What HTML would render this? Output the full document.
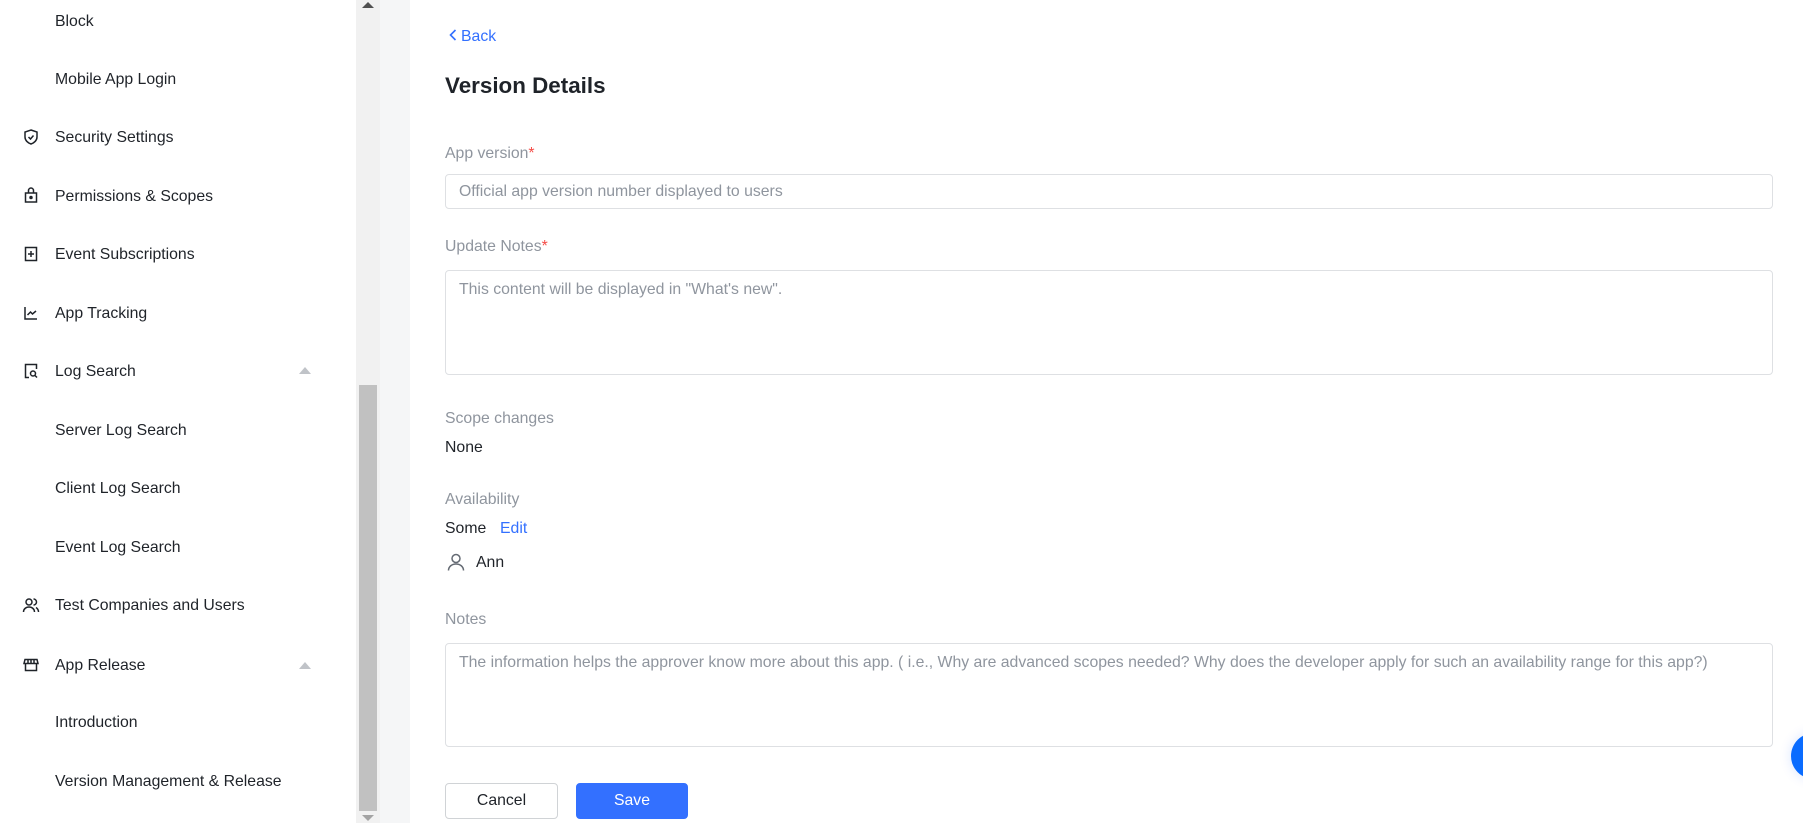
<!DOCTYPE html>
<html><head><style>
*{margin:0;padding:0;box-sizing:border-box}
body{width:1803px;height:823px;overflow:hidden;background:#fff;font-family:"Liberation Sans",Arial,sans-serif;position:relative;color:#1f2329}
.side{position:absolute;left:0;top:0;width:356px;height:823px;background:#fff}
.it{position:absolute;left:55px;font-size:15.8px;color:#1f2329;line-height:20px}
.ic{position:absolute;left:22px;width:18px;height:18px}
.car{position:absolute;left:299px;width:0;height:0;border-left:6px solid transparent;border-right:6px solid transparent;border-bottom:7px solid #c0c3c8}
.sb{position:absolute;left:356px;top:0;width:24px;height:823px;background:#f1f1f1}
.thumb{position:absolute;left:359px;top:385px;width:18px;height:426px;background:#c1c1c1}
.gap{position:absolute;left:380px;top:0;width:30px;height:823px;background:#f5f6f7}
.lbl{position:absolute;left:445px;font-size:15.8px;color:#8f959e;line-height:20px}
.lbl i{color:#f54a45;font-style:normal}
.box{position:absolute;left:445px;width:1328px;border:1px solid #dee0e3;border-radius:4px;font-size:15.8px;color:#8f959e;padding:9px 13px;line-height:20px}
.txt{position:absolute;font-size:15.8px;color:#1f2329;line-height:20px}
.btn{position:absolute;top:783px;height:36px;border-radius:4px;font-size:15.8px;text-align:center;line-height:34px}
</style></head><body>
<div class="side">
<div class="it" style="top:12px">Block</div>
<div class="it" style="top:70px">Mobile App Login</div>
<svg class="ic" style="top:128px" viewBox="0 0 18 18" fill="none" stroke="#1f2329" stroke-width="1.5"><path d="M9 2l6 2v5c0 3.5-3 6-6 7-3-1-6-3.5-6-7V4z"/><path d="M6.5 9l2 2 3-3.5"/></svg>
<div class="it" style="top:128px">Security Settings</div>
<svg class="ic" style="top:186px" viewBox="0 0 18 18" fill="none" stroke="#1f2329" stroke-width="1.5"><rect x="3.5" y="7" width="11" height="9"/><path d="M6.5 7V4.5a2.5 2.5 0 015 0V7"/><circle cx="9" cy="11.5" r="1" fill="#1f2329"/></svg>
<div class="it" style="top:187px">Permissions &amp; Scopes</div>
<svg class="ic" style="top:245px" viewBox="0 0 18 18" fill="none" stroke="#1f2329" stroke-width="1.5"><path d="M3.5 2.5h11v13h-11z"/><path d="M9 6v6M6 9h6"/></svg>
<div class="it" style="top:245px">Event Subscriptions</div>
<svg class="ic" style="top:304px" viewBox="0 0 18 18" fill="none" stroke="#1f2329" stroke-width="1.5"><path d="M3 3v12h12"/><path d="M5.5 11l3-3 2 2 3.5-3"/></svg>
<div class="it" style="top:304px">App Tracking</div>
<svg class="ic" style="top:362px" viewBox="0 0 18 18" fill="none" stroke="#1f2329" stroke-width="1.5"><path d="M7 15.5H3.5v-13h11V7"/><circle cx="11" cy="11.5" r="2.5"/><path d="M13 13.5l2 2"/></svg>
<div class="it" style="top:362px">Log Search</div>
<div class="car" style="top:367px"></div>
<div class="it" style="top:421px">Server Log Search</div>
<div class="it" style="top:479px">Client Log Search</div>
<div class="it" style="top:538px">Event Log Search</div>
<svg class="ic" style="top:596px" viewBox="0 0 18 18" fill="none" stroke="#1f2329" stroke-width="1.5"><circle cx="7" cy="6" r="3"/><path d="M1.5 16c0-3 2.5-5 5.5-5s5.5 2 5.5 5"/><path d="M11.5 3a3 3 0 010 6M14 11.5c1.5 1 2.5 2.5 2.5 4.5"/></svg>
<div class="it" style="top:596px">Test Companies and Users</div>
<svg class="ic" style="top:656px" viewBox="0 0 18 18" fill="none" stroke="#1f2329" stroke-width="1.5"><path d="M3 3.5h12l1 4H2z"/><path d="M3.5 7.5v7h11v-7"/><path d="M6 4v3.5M9 4v3.5M12 4v3.5"/></svg>
<div class="it" style="top:656px">App Release</div>
<div class="car" style="top:662px"></div>
<div class="it" style="top:713px">Introduction</div>
<div class="it" style="top:772px">Version Management &amp; Release</div>
</div>
<div class="sb"></div>
<div style="position:absolute;left:362px;top:2px;border-left:6px solid transparent;border-right:6px solid transparent;border-bottom:6px solid #505050"></div>
<div style="position:absolute;left:362px;top:815px;border-left:6px solid transparent;border-right:6px solid transparent;border-top:6px solid #a3a3a3"></div>
<div class="thumb"></div>
<div class="gap"></div>

<div class="txt" style="left:448px;top:27px;color:#3370ff">
<svg width="10" height="14" viewBox="0 0 10 14" style="vertical-align:-1px;margin-right:3px" fill="none" stroke="#3370ff" stroke-width="1.6"><path d="M7.5 2L2.5 7l5 5"/></svg>Back</div>
<div class="txt" style="left:445px;top:73px;font-size:22.4px;font-weight:bold;line-height:26px">Version Details</div>

<div class="lbl" style="top:144px">App version<i>*</i></div>
<div class="box" style="top:174px;height:35px;padding-top:7px">Official app version number displayed to users</div>
<div class="lbl" style="top:237px">Update Notes<i>*</i></div>
<div class="box" style="top:270px;height:105px">This content will be displayed in "What's new".</div>

<div class="lbl" style="top:409px">Scope changes</div>
<div class="txt" style="left:445px;top:438px">None</div>
<div class="lbl" style="top:490px">Availability</div>
<div class="txt" style="left:445px;top:519px">Some</div>
<div class="txt" style="left:500px;top:519px;color:#3370ff">Edit</div>
<svg style="position:absolute;left:446px;top:552px" width="20" height="20" viewBox="0 0 20 20" fill="none" stroke="#646a73" stroke-width="1.5"><circle cx="10" cy="6.5" r="4"/><path d="M2.5 18.5c0-4 3.5-6.5 7.5-6.5s7.5 2.5 7.5 6.5"/></svg>
<div class="txt" style="left:476px;top:553px">Ann</div>

<div class="lbl" style="top:610px">Notes</div>
<div class="box" style="top:643px;height:104px">The information helps the approver know more about this app. ( i.e., Why are advanced scopes needed? Why does the developer apply for such an availability range for this app?)</div>

<div class="btn" style="left:445px;width:113px;border:1px solid #d0d3d6;color:#1f2329">Cancel</div>
<div class="btn" style="left:576px;width:112px;background:#3370ff;color:#fff;border:1px solid #3370ff">Save</div>

<div style="position:absolute;left:1791px;top:733px;width:46px;height:46px;border-radius:50%;background:#0a6cff;box-shadow:0 0 12px rgba(0,80,255,.15)"></div>
</body></html>
